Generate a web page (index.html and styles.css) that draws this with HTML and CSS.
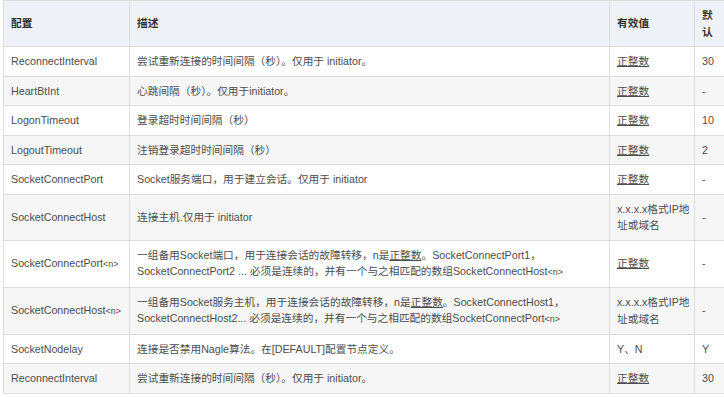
FILE: index.html
```html
<!DOCTYPE html>
<html lang="zh">
<head>
<meta charset="utf-8">
<title>配置</title>
<link rel="stylesheet" href="styles.css">
</head>
<body>
<table class="cfg">
  <colgroup>
    <col class="c-name">
    <col class="c-desc">
    <col class="c-val">
    <col class="c-def">
  </colgroup>
  <thead>
    <tr><th>配置</th><th>描述</th><th>有效值</th><th>默认</th></tr>
  </thead>
  <tbody>
    <tr><td>ReconnectInterval</td><td>尝试重新连接的时间间隔（秒）。仅用于 initiator。</td><td><span class="u">正整数</span></td><td>30</td></tr>
    <tr><td>HeartBtInt</td><td>心跳间隔（秒）。仅用于initiator。</td><td><span class="u">正整数</span></td><td>-</td></tr>
    <tr><td>LogonTimeout</td><td>登录超时时间间隔（秒）</td><td><span class="u">正整数</span></td><td>10</td></tr>
    <tr><td>LogoutTimeout</td><td>注销登录超时时间间隔（秒）</td><td><span class="u">正整数</span></td><td>2</td></tr>
    <tr><td>SocketConnectPort</td><td>Socket服务端口，用于建立会话。仅用于 initiator</td><td><span class="u">正整数</span></td><td>-</td></tr>
    <tr><td>SocketConnectHost</td><td>连接主机.仅用于 initiator</td><td class="ip">x.x.x.x格式IP地址或域名</td><td>-</td></tr>
    <tr><td>SocketConnectPort<span class="sm">&lt;n&gt;</span></td><td>一组备用Socket端口，用于连接会话的故障转移，n是<span class="u">正整数</span>。SocketConnectPort1，SocketConnectPort2 ... 必须是连续的，并有一个与之相匹配的数组SocketConnectHost<span class="sm">&lt;n&gt;</span></td><td><span class="u">正整数</span></td><td>-</td></tr>
    <tr><td>SocketConnectHost<span class="sm">&lt;n&gt;</span></td><td>一组备用Socket服务主机，用于连接会话的故障转移，n是<span class="u">正整数</span>。SocketConnectHost1，SocketConnectHost2... 必须是连续的，并有一个与之相匹配的数组SocketConnectPort<span class="sm">&lt;n&gt;</span></td><td class="ip">x.x.x.x格式IP地址或域名</td><td>-</td></tr>
    <tr><td>SocketNodelay</td><td>连接是否禁用Nagle算法。在[DEFAULT]配置节点定义。</td><td>Y、N</td><td>Y</td></tr>
    <tr><td>ReconnectInterval</td><td>尝试重新连接的时间间隔（秒）。仅用于 initiator。</td><td><span class="u">正整数</span></td><td>30</td></tr>
  </tbody>
</table>
</body>
</html>
```
FILE: styles.css
```css
html, body {
  margin: 0;
  padding: 0;
  background: #ffffff;
  overflow: hidden;
}
body {
  padding: 0 0 0 3px;
  font-family: "Liberation Sans", "Noto Sans CJK SC", sans-serif;
  font-size: 10.7px;
  line-height: 16.5px;
  color: #4d4d4d;
}
.cfg {
  border-collapse: collapse;
  table-layout: fixed;
  width: 734px;
}
.c-name { width: 126px; }
.c-desc { width: 480px; }
.c-val { width: 85px; }
.c-def { width: 43px; }
.cfg th,
.cfg td {
  border: 1px solid #dddddd;
  padding: 6px 6px 6px 7px;
  text-align: left;
  vertical-align: middle;
  word-break: break-word;
}
.cfg td.ip {
  padding-right: 1px;
  word-break: break-all;
}
.cfg th {
  background: #eef1f5;
  color: #333333;
  font-weight: bold;
}
.cfg th:last-child {
  padding-right: 20px;
}
.cfg tbody tr:nth-child(even) td {
  background: #f6f6f6;
}
.u {
  text-decoration: underline;
}
.sm {
  font-size: 9px;
}
```
